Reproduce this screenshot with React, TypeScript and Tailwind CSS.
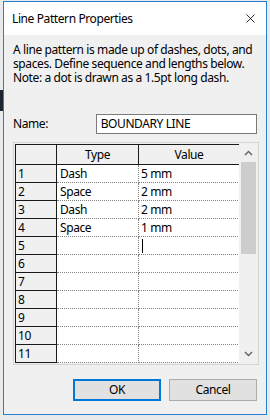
import { X } from "lucide-react";

const rows = [
  { type: "Dash", value: "5 mm" },
  { type: "Space", value: "2 mm" },
  { type: "Dash", value: "2 mm" },
  { type: "Space", value: "1 mm" },
  { type: "", value: "", cursor: true },
  { type: "", value: "" },
  { type: "", value: "" },
  { type: "", value: "" },
  { type: "", value: "" },
  { type: "", value: "" },
  { type: "", value: "" },
];

function Chevron({ up }: { up?: boolean }) {
  return (
    <svg width="9" height="6" viewBox="0 0 9 6" className="block">
      <path
        d={up ? "M1 5 L4.5 1.5 L8 5" : "M1 1 L4.5 4.5 L8 1"}
        fill="none"
        stroke="#606060"
        strokeWidth="1.4"
      />
    </svg>
  );
}

export default function App() {
  return (
    <div className="flex h-[420px] w-[270px] overflow-hidden bg-[#e9eaec] pt-px font-['Noto_Sans',sans-serif] text-[12px] tracking-[-0.4px] text-black">
      {/* strip of the app behind the dialog */}
      <div className="w-[3px] shrink-0 pt-[89px]">
        <div className="h-[21px] w-[3px] bg-[#1c2430]" />
      </div>

      <div className="flex h-[414px] w-[264px] flex-col border border-[#2b7dd0] bg-[#f0f0f0]">
        {/* title bar */}
        <div className="flex h-[33px] shrink-0 items-center justify-between bg-white pl-[8px] pr-[8px]">
          <span className="pt-[1px]">Line Pattern Properties</span>
          <X size={15} strokeWidth={1.3} className="text-black" />
        </div>

        <div className="flex flex-1 flex-col px-[9px]">
          <p className="mt-[8px] whitespace-nowrap leading-[14px]">
            A line pattern is made up of dashes, dots, and
            <br />
            spaces. Define sequence and lengths below.
            <br />
            Note: a dot is drawn as a 1.5pt long dash.
          </p>

          <div className="mt-[29px] flex items-center">
            <span className="w-[83px]">Name:</span>
            <div className="flex h-[20px] w-[162px] items-center border border-[#7a7a7a] bg-white pl-[4px]">
              BOUNDARY LINE
            </div>
          </div>

          {/* grid control */}
          <div className="mt-[8px] w-[246px] border border-[#d4d4d4] bg-[#f0f0f0] p-px">
            <div className="flex">
              <div className="w-[224px] border-t border-l border-[#1a1a1a]">
                {/* header */}
                <div className="grid h-[20px] grid-cols-[41px_82px_101px] border-b border-[#1a1a1a]">
                  <div className="border-r border-[#1a1a1a]" />
                  <div className="flex items-center justify-center border-r border-[#1a1a1a]">Type</div>
                  <div className="flex items-center justify-center border-r border-[#1a1a1a]">Value</div>
                </div>
                {rows.map((r, i) => (
                  <div key={i} className="grid h-[18px] grid-cols-[41px_82px_101px]">
                    <div className="flex items-center border-r border-b border-[#1a1a1a] pl-[2px] leading-none">
                      {i + 1}
                    </div>
                    <div className="flex items-center border-r border-b border-dotted border-[#808080] bg-white pl-[3px] leading-none">
                      {r.type}
                    </div>
                    <div className="flex items-center border-r border-b border-dotted border-[#808080] bg-white pl-[2px] leading-none">
                      {r.value}
                      {r.cursor && <span className="ml-px h-[14px] w-px bg-black" />}
                    </div>
                  </div>
                ))}
              </div>
              {/* scrollbar */}
              <div className="flex w-[18px] flex-col items-center bg-[#f0f0f0]">
                <div className="flex h-[18px] items-center">
                  <Chevron up />
                </div>
                <div className="h-[92px] w-[15px] bg-[#cdcdcd]" />
                <div className="flex-1" />
                <div className="flex h-[18px] items-center">
                  <Chevron />
                </div>
              </div>
            </div>
          </div>

          <div className="mt-[14px] flex justify-end gap-[8px]">
            <button className="flex h-[22px] w-[88px] items-center justify-center border-2 border-[#0078d7] bg-[#e1e1e1]">
              OK
            </button>
            <button className="flex h-[22px] w-[88px] items-center justify-center border border-[#adadad] bg-[#e1e1e1]">
              Cancel
            </button>
          </div>
        </div>
      </div>
    </div>
  );
}
